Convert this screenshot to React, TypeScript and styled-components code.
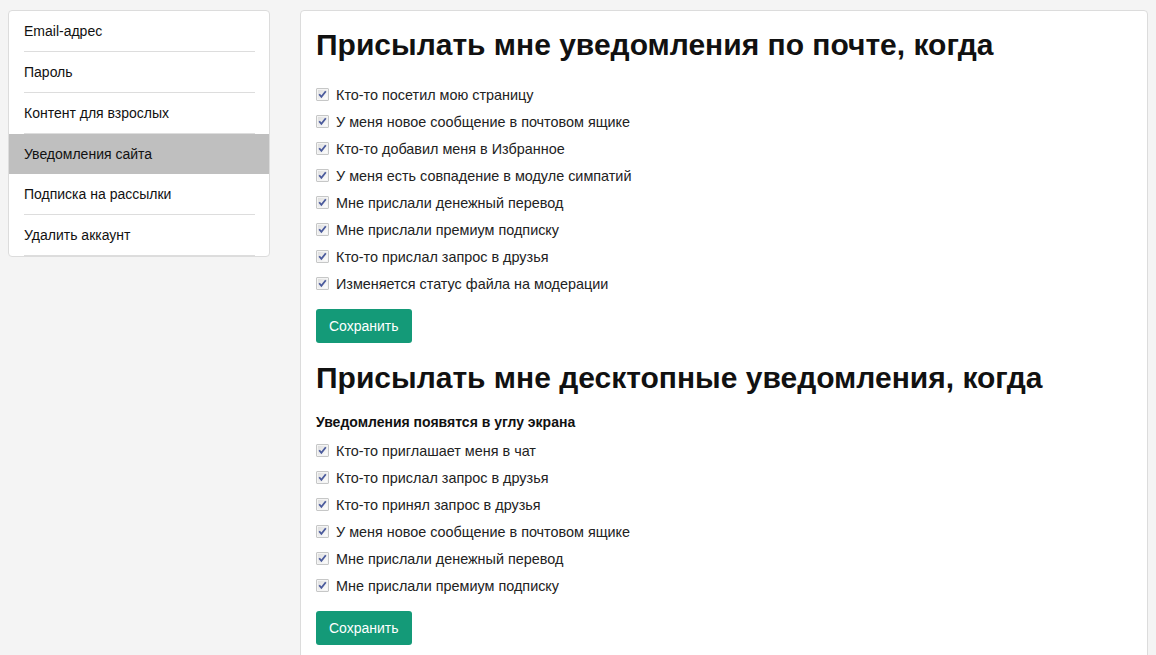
import React, { useState } from "react";
import styled, { createGlobalStyle } from "styled-components";

const GlobalStyle = createGlobalStyle`
  html, body {
    margin: 0;
    padding: 0;
    background: #f4f4f4;
    font-family: "Liberation Sans", Arial, sans-serif;
    color: #111;
  }
`;

const Page = styled.div`
  display: flex;
  align-items: flex-start;
  gap: 30px;
  padding: 10px 8px 0 8px;
`;

const Sidebar = styled.nav`
  flex: 0 0 262px;
  box-sizing: border-box;
  background: #fff;
  border: 1px solid #dcdcdc;
  border-radius: 4px;
  overflow: hidden;
`;

const NavItem = styled.a<{ $active?: boolean }>`
  position: relative;
  display: flex;
  align-items: center;
  height: ${(p) => (p.$active ? 40 : 41)}px;
  box-sizing: border-box;
  padding: 0 15px ${(p) => (p.$active ? 0 : 1)}px 15px;
  font-size: 14px;
  color: #111;
  text-decoration: none;
  cursor: pointer;
  background: ${(p) => (p.$active ? "#bfbfbf" : "transparent")};

  &::after {
    content: "";
    display: ${(p) => (p.$active ? "none" : "block")};
    position: absolute;
    left: 15px;
    right: 14px;
    bottom: 0;
    height: 1px;
    background: #dddddd;
  }
`;

const Main = styled.main`
  flex: 1;
  box-sizing: border-box;
  background: #fff;
  border: 1px solid #dcdcdc;
  border-radius: 4px;
  padding: 16px 15px 20px 15px;
  min-height: 700px;
`;

const Heading = styled.h1<{ $top?: number }>`
  margin: ${(p) => p.$top ?? 0}px 0 0 0;
  font-size: 30px;
  line-height: 35px;
  font-weight: bold;
  color: #111;
`;

const Note = styled.div`
  margin-top: 17px;
  font-size: 14px;
  line-height: 20px;
  font-weight: bold;
`;

const List = styled.div<{ $top: number }>`
  display: flex;
  flex-direction: column;
  margin-top: ${(p) => p.$top}px;
`;

const Row = styled.label`
  display: flex;
  align-items: center;
  gap: 7px;
  height: 27px;
  font-size: 14.4px;
  color: #222;
  cursor: pointer;

  input {
    display: none;
  }
`;

const Box = styled.span`
  display: inline-flex;
  width: 13px;
  height: 13px;
  flex: 0 0 13px;
`;

const SaveButton = styled.button`
  margin-top: 12px;
  height: 34px;
  padding: 0 13px;
  border: none;
  border-radius: 3px;
  background: #149a78;
  color: #fff;
  font-family: "Liberation Sans", Arial, sans-serif;
  font-size: 14px;
  cursor: pointer;
`;

const CheckIcon = ({ on }: { on: boolean }) => (
  <Box>
    <svg width="13" height="13" viewBox="0 0 13 13">
      <defs>
        <linearGradient id="cbg" x1="0" y1="0" x2="1" y2="1">
          <stop offset="0" stopColor="#dcdcdc" />
          <stop offset="1" stopColor="#ffffff" />
        </linearGradient>
      </defs>
      <rect x="0.5" y="0.5" width="12" height="12" fill="#8e8f8f" />
      <rect x="1.5" y="1.5" width="10" height="10" fill="url(#cbg)" stroke="#f4f4f4" strokeWidth="1" />
      {on && (
        <path d="M3.2 6.2 L5.4 8.9 L9.8 3.3" fill="none" stroke="#4a5a9c" strokeWidth="1.8" />
      )}
    </svg>
  </Box>
);

const Check = ({ label }: { label: string }) => {
  const [on, setOn] = useState(true);
  return (
    <Row>
      <input type="checkbox" checked={on} onChange={() => setOn(!on)} />
      <CheckIcon on={on} />
      {label}
    </Row>
  );
};

const menu = [
  "Email-адрес",
  "Пароль",
  "Контент для взрослых",
  "Уведомления сайта",
  "Подписка на рассылки",
  "Удалить аккаунт",
];

const mailItems = [
  "Кто-то посетил мою страницу",
  "У меня новое сообщение в почтовом ящике",
  "Кто-то добавил меня в Избранное",
  "У меня есть совпадение в модуле симпатий",
  "Мне прислали денежный перевод",
  "Мне прислали премиум подписку",
  "Кто-то прислал запрос в друзья",
  "Изменяется статус файла на модерации",
];

const desktopItems = [
  "Кто-то приглашает меня в чат",
  "Кто-то прислал запрос в друзья",
  "Кто-то принял запрос в друзья",
  "У меня новое сообщение в почтовом ящике",
  "Мне прислали денежный перевод",
  "Мне прислали премиум подписку",
];

export default function App() {
  return (
    <>
      <GlobalStyle />
      <Page>
        <Sidebar>
          {menu.map((m, i) => (
            <NavItem key={m} $active={i === 3}>
              {m}
            </NavItem>
          ))}
        </Sidebar>
        <Main>
          <Heading>Присылать мне уведомления по почте, когда</Heading>
          <List $top={19}>
            {mailItems.map((t) => (
              <Check key={t} label={t} />
            ))}
          </List>
          <SaveButton>Сохранить</SaveButton>
          <Heading $top={17}>Присылать мне десктопные уведомления, когда</Heading>
          <Note>Уведомления появятся в углу экрана</Note>
          <List $top={5}>
            {desktopItems.map((t) => (
              <Check key={t} label={t} />
            ))}
          </List>
          <SaveButton>Сохранить</SaveButton>
        </Main>
      </Page>
    </>
  );
}
